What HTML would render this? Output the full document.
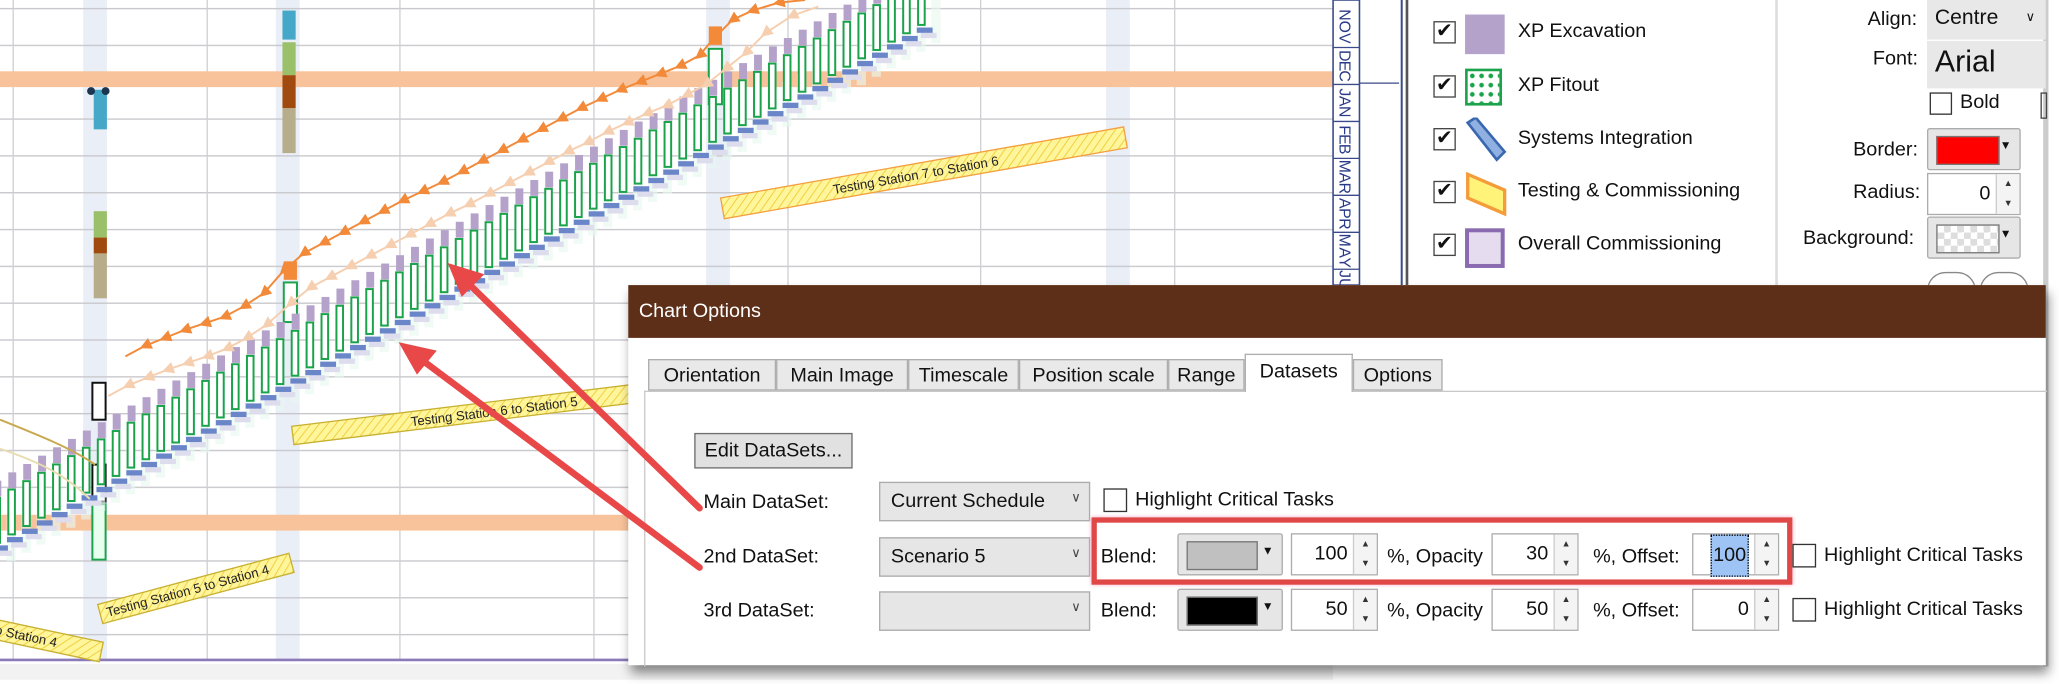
<!DOCTYPE html>
<html><head><meta charset="utf-8"><style>
html,body{margin:0;padding:0;background:#fff;overflow:hidden}
#w{position:absolute;left:0;top:0;width:1560px;height:518px;transform:scale(1.31987);transform-origin:0 0;font-family:"Liberation Sans",sans-serif;color:#111}
.a{position:absolute}
.tab{position:absolute;top:272px;height:24px;border:1px solid #adadad;background:#e9e9e9;font-size:15px;line-height:24px;text-align:center;box-sizing:border-box}
.lbl{position:absolute;font-size:15px}
.combo{position:absolute;width:160px;height:30px;border:1px solid #acacac;background:#e6e6e6;box-sizing:border-box;font-size:15px;line-height:28px;padding-left:8px}
.combo:after{content:"\2228";position:absolute;right:6px;top:-2px;font-size:10px;color:#444}
.cb{position:absolute;width:16px;height:16px;border:1px solid #333;background:#fff;box-sizing:border-box}
.spin{position:absolute;width:66px;height:32px;border:1px solid #acacac;background:#fff;box-sizing:border-box;font-size:15px;line-height:30px}
.spin span{position:absolute;right:22px}
.spin i{position:absolute;right:0;top:0;width:17px;height:30px;border-left:1px solid #ccc;background:#f4f4f4;font-style:normal;font-size:7px;line-height:15px;text-align:center;color:#333}
.colb{position:absolute;width:80px;height:32px;border:1px solid #acacac;background:#e6e6e6;box-sizing:border-box;border-radius:2px}
.colb b{position:absolute;left:6px;top:5px;width:52px;height:20px;border:1px solid #777}
.colb:after{content:"\25BC";position:absolute;right:6px;top:7px;font-size:9px}
.leg{position:absolute;left:1086px;font-size:15px}
.leg .cb{left:0;top:0;width:17px;height:17px;border-color:#444}
.leg .cb:after{content:"\2714";position:absolute;left:1px;top:-3px;font-size:15px}
.leg .t{position:absolute;left:64px;top:-1px;white-space:nowrap}
</style></head><body><div id="w">
<svg class="a" style="left:0;top:0" width="1560" height="518" viewBox="0 0 1560 518">
<defs>
<pattern id="hg" width="1560" height="27.9" patternUnits="userSpaceOnUse" y="6"><line x1="0" y1="0.5" x2="1560" y2="0.5" stroke="#c8c8cc" stroke-width="1"/></pattern>
<pattern id="yl" width="5" height="5" patternUnits="userSpaceOnUse" patternTransform="rotate(45)"><rect width="5" height="5" fill="#fff59a"/><line x1="0" y1="0" x2="0" y2="5" stroke="#f0d040" stroke-width="1.5"/></pattern>
<marker id="tri" markerWidth="6" markerHeight="6" refX="3" refY="3" orient="auto"><path d="M6,0 L0,3 L6,6 Z" fill="#f28a3a"/></marker>
<marker id="tri2" markerWidth="6" markerHeight="6" refX="3" refY="3" orient="auto"><path d="M6,0 L0,3 L6,6 Z" fill="#f6cfb0"/></marker>
</defs>
<rect width="1560" height="518" fill="#fff"/>
<rect x="63" y="0" width="18" height="500" fill="#e9eef7"/>
<rect x="209" y="0" width="18" height="500" fill="#e9eef7"/>
<rect x="535" y="0" width="18" height="500" fill="#e9eef7"/>
<rect x="838" y="0" width="18" height="500" fill="#e9eef7"/>
<rect width="1010" height="500" fill="url(#hg)"/>
<g stroke="#cfcfd4" stroke-width="1">
<line x1="10" y1="0" x2="10" y2="500"/><line x1="157" y1="0" x2="157" y2="500"/><line x1="303" y1="0" x2="303" y2="500"/><line x1="450" y1="0" x2="450" y2="500"/><line x1="597" y1="0" x2="597" y2="500"/><line x1="743" y1="0" x2="743" y2="500"/><line x1="890" y1="0" x2="890" y2="500"/>
</g>
<rect x="0" y="54" width="1010" height="12" fill="#f8c39b"/>
<rect x="0" y="390" width="480" height="12" fill="#f8c39b"/>
<line x1="0" y1="500" x2="1010" y2="500" stroke="#8a7ab8" stroke-width="2"/>
<rect x="0" y="503" width="1010" height="12" fill="#f2f2f2"/>
<rect x="71" y="68" width="10" height="30" fill="#45a8c8"/><circle cx="69" cy="69" r="3" fill="#1c3550"/><circle cx="80" cy="69" r="3" fill="#1c3550"/>
<rect x="71" y="160" width="10" height="20" fill="#9bc06a"/><rect x="71" y="180" width="10" height="12" fill="#a14a10"/><rect x="71" y="192" width="10" height="34" fill="#b8ad8a"/>
<rect x="214" y="8" width="10" height="22" fill="#45a8c8"/><rect x="214" y="32" width="10" height="25" fill="#9bc06a"/><rect x="214" y="57" width="10" height="25" fill="#a14a10"/><rect x="214" y="82" width="10" height="34" fill="#b8ad8a"/>
<rect x="215" y="198" width="10" height="14" fill="#f28a3a"/><rect x="215" y="214" width="10" height="30" fill="#fff" stroke="#1aa34a" stroke-width="1.5"/>
<rect x="70" y="290" width="10" height="28" fill="#fff" stroke="#111" stroke-width="1.5"/>
<rect x="70" y="352" width="10" height="28" fill="#fff" stroke="#111" stroke-width="1.5"/>
<rect x="70" y="382" width="10" height="42" fill="#e8fff0" stroke="#1aa34a" stroke-width="1.5"/>
<rect x="537" y="20" width="10" height="14" fill="#f28a3a"/><rect x="537" y="37" width="10" height="42" fill="#fff" stroke="#1aa34a" stroke-width="1.5"/>
<g id="bars"></g>
<path d="M95,270 L110,262 L125,256 L140,250 L155,245 L170,240 L185,232 L200,222 L215,205 L230,192 L245,184 L260,176 L275,168 L290,160 L305,152 L320,145 L335,138 L350,130 L365,122 L380,114 L395,106 L410,98 L425,90 L440,82 L455,75 L470,68 L485,62 L500,56 L515,50 L530,42 L540,30 L555,15 L570,8 L590,2 L610,0" fill="none" stroke="#f28a3a" stroke-width="1.5" marker-mid="url(#tri)"/>
<path d="M82,300 L97,292 L112,286 L127,280 L142,275 L157,270 L172,264 L187,256 L202,246 L220,230 L235,218 L250,210 L265,202 L280,194 L295,186 L310,178 L325,170 L340,162 L355,155 L370,147 L385,139 L400,131 L415,123 L430,115 L445,108 L460,100 L475,93 L490,86 L505,80 L520,72 L535,64 L550,52 L565,40 L580,25 L600,12 L620,5" fill="none" stroke="#f6cfb0" stroke-width="1.5" marker-mid="url(#tri2)"/>
<path d="M0,318 C30,330 55,340 72,352" fill="none" stroke="#c8a850" stroke-width="1.5"/>
<path d="M0,340 C30,350 50,360 68,378" fill="none" stroke="#e8dcb0" stroke-width="1.5"/>
<g transform="translate(546,150) rotate(-10)"><rect x="0" y="0" width="310" height="16" fill="url(#yl)" stroke="#f2a040" stroke-width="1"/><text x="85" y="12" font-size="10" fill="#222" font-family="Liberation Sans">Testing Station 7 to Station 6</text></g>
<g transform="translate(221,323) rotate(-7)"><rect x="0" y="0" width="260" height="14" fill="url(#yl)" stroke="#c8b030" stroke-width="1"/><text x="90" y="11" font-size="10" fill="#222" font-family="Liberation Sans">Testing Station 6 to Station 5</text></g>
<g transform="translate(74,458) rotate(-15)"><rect x="0" y="0" width="150" height="15" fill="url(#yl)" stroke="#c8b030" stroke-width="1"/><text x="5" y="11" font-size="10" fill="#222" font-family="Liberation Sans">Testing Station 5 to Station 4</text></g>
<g transform="translate(0,470) rotate(12)"><rect x="-40" y="0" width="120" height="15" fill="url(#yl)" stroke="#c8b030" stroke-width="1"/><text x="-2" y="11" font-size="10" fill="#222" font-family="Liberation Sans">o Station 4</text></g>
<rect x="1010" y="0" width="20" height="216" fill="#fff" stroke="#3a4a8a" stroke-width="1.2"/>
<line x1="1030" y1="63" x2="1060" y2="63" stroke="#3a4a8a"/>
<line x1="1062" y1="0" x2="1062" y2="216" stroke="#3a4a8a" stroke-width="1.5"/>
<line x1="1066" y1="0" x2="1066" y2="216" stroke="#555" stroke-width="2"/>
<g font-size="12" fill="#2a3a8a" font-family="Liberation Sans" text-anchor="middle">
<text transform="translate(1015,20) rotate(90)" textLength="26">NOV</text>
<text transform="translate(1015,50) rotate(90)" textLength="24">DEC</text>
<text transform="translate(1015,78) rotate(90)" textLength="22">JAN</text>
<text transform="translate(1015,106) rotate(90)" textLength="22">FEB</text>
<text transform="translate(1015,134) rotate(90)" textLength="26">MAR</text>
<text transform="translate(1015,162) rotate(90)" textLength="24">APR</text>
<text transform="translate(1015,190) rotate(90)" textLength="26">MAY</text>
<text transform="translate(1015,212) rotate(90)">JU</text>
</g>
<g stroke="#3a4a8a"><line x1="1010" y1="36" x2="1030" y2="36"/><line x1="1010" y1="64" x2="1030" y2="64"/><line x1="1010" y1="92" x2="1030" y2="92"/><line x1="1010" y1="120" x2="1030" y2="120"/><line x1="1010" y1="148" x2="1030" y2="148"/><line x1="1010" y1="176" x2="1030" y2="176"/><line x1="1010" y1="204" x2="1030" y2="204"/></g>
<line x1="1346" y1="0" x2="1346" y2="216" stroke="#ddd" stroke-width="2"/>
<rect x="1550" y="0" width="10" height="518" fill="#fff"/>
<rect x="1548" y="0" width="4" height="505" fill="#ccc"/>
</svg>

<div class="leg" style="top:16px"><div class="cb"></div><div class="a" style="left:24px;top:-5px;width:30px;height:30px;background:#b4a2ca"></div><div class="t">XP Excavation</div></div>
<div class="leg" style="top:57px"><div class="cb"></div><div class="a" style="left:24px;top:-5px;width:28px;height:28px;border:2px solid #1aa34a;background:radial-gradient(#1aa34a 1.5px,transparent 2px) 0 0/7px 7px #fff;box-sizing:border-box"></div><div class="t">XP Fitout</div></div>
<div class="leg" style="top:97px"><div class="cb"></div><svg class="a" style="left:24px;top:-8px" width="32" height="34"><path d="M2,4 L8,0 L30,26 L24,32 Z" fill="#8fb0e0" stroke="#3a68b0" stroke-width="2"/></svg><div class="t">Systems Integration</div></div>
<div class="leg" style="top:137px"><div class="cb"></div><svg class="a" style="left:24px;top:-7px" width="32" height="34"><path d="M2,2 L30,14 L30,32 L2,20 Z" fill="#fff37a" stroke="#f49b3a" stroke-width="2.5"/></svg><div class="t">Testing &amp; Commissioning</div></div>
<div class="leg" style="top:177px"><div class="cb"></div><div class="a" style="left:24px;top:-4px;width:30px;height:30px;border:3px solid #8a6bb0;background:#e5dcf0;box-sizing:border-box"></div><div class="t">Overall Commissioning</div></div>
<div class="lbl" style="left:1415px;top:6px">Align:</div><div class="a" style="left:1460px;top:0;width:90px;height:30px;background:#e8e8e8;font-size:16px;line-height:28px;padding-left:6px;box-sizing:border-box">Centre <span style="font-size:10px;position:absolute;right:8px">&#8744;</span></div>
<div class="lbl" style="left:1419px;top:36px">Font:</div><div class="a" style="left:1460px;top:31px;width:90px;height:36px;background:#e8e8e8;font-size:23px;line-height:30px;padding-left:6px;box-sizing:border-box">Arial</div>
<div class="cb" style="left:1462px;top:70px;width:17px;height:17px"></div><div class="lbl" style="left:1485px;top:69px">Bold</div><div class="a" style="left:1546px;top:70px;width:3px;height:18px;border:1px solid #444"></div>
<div class="lbl" style="left:1404px;top:105px">Border:</div><div class="colb" style="left:1460px;top:97px;width:71px"><b style="background:#f00;width:46px"></b></div>
<div class="lbl" style="left:1404px;top:137px">Radius:</div><div class="spin" style="left:1460px;top:131px;width:71px"><span>0</span><i>▲<br>▼</i></div>
<div class="lbl" style="left:1366px;top:172px">Background:</div><div class="colb" style="left:1460px;top:164px;width:71px"><b style="background:repeating-conic-gradient(#ddd 0 25%,#fff 0 50%) 0 0/10px 10px;width:46px"></b></div>
<div class="a" style="left:1460px;top:206px;width:35px;height:14px;border:1px solid #888;border-radius:14px 14px 0 0"></div><div class="a" style="left:1500px;top:206px;width:35px;height:14px;border:1px solid #888;border-radius:14px 14px 0 0"></div>

<div class="a" style="left:476px;top:216px;width:1074px;height:288px;background:#fff;box-shadow:2px 6px 8px rgba(0,0,0,.45)"></div>
<div class="a" style="left:476px;top:216px;width:1074px;height:40px;background:#5e2f18;color:#fff;font-size:15px;line-height:40px;padding-left:8px;box-sizing:border-box">Chart Options</div>
<div class="a" style="left:488px;top:296px;width:1062px;height:208px;border-left:1px solid #c8c8c8;border-top:1px solid #c8c8c8"></div>
<div class="tab" style="left:491px;width:97px">Orientation</div>
<div class="tab" style="left:588px;width:100px">Main Image</div>
<div class="tab" style="left:688px;width:84px">Timescale</div>
<div class="tab" style="left:772px;width:113px">Position scale</div>
<div class="tab" style="left:885px;width:58px">Range</div>
<div class="tab" style="left:943px;width:82px;top:268px;height:29px;background:#fff;border-bottom:none;line-height:26px">Datasets</div>
<div class="tab" style="left:1025px;width:68px">Options</div>
<div class="a" style="left:526px;top:328px;width:120px;height:27px;border:1px solid #6e6e6e;background:#e1e1e1;font-size:15px;line-height:26px;text-align:center;box-sizing:border-box">Edit DataSets...</div>
<div class="lbl" style="left:533px;top:372px">Main DataSet:</div>
<div class="combo" style="left:666px;top:365px">Current Schedule</div>
<div class="cb" style="left:836px;top:370px;width:18px;height:18px"></div><div class="lbl" style="left:860px;top:370px">Highlight Critical Tasks</div>
<div class="lbl" style="left:533px;top:413px">2nd DataSet:</div>
<div class="combo" style="left:666px;top:407px">Scenario 5</div>
<div class="lbl" style="left:533px;top:454px">3rd DataSet:</div>
<div class="combo" style="left:666px;top:448px"></div>
<div class="a" style="left:827px;top:392px;width:531px;height:51px;border:4px solid #e04848;box-sizing:border-box;box-shadow:0 0 3px #f0a0c0"></div>
<div class="lbl" style="left:834px;top:413px">Blend:</div>
<div class="colb" style="left:892px;top:404px"><b style="background:#c0c0c0"></b></div>
<div class="spin" style="left:978px;top:404px"><span>100</span><i>▲<br>▼</i></div>
<div class="lbl" style="left:1051px;top:413px">%, Opacity</div>
<div class="spin" style="left:1130px;top:404px"><span>30</span><i>▲<br>▼</i></div>
<div class="lbl" style="left:1207px;top:413px">%, Offset:</div>
<div class="spin" style="left:1282px;top:404px"><span style="background:#9ec4f6;border:1px dotted #000;padding:0 1px">100</span><i>▲<br>▼</i></div>
<div class="cb" style="left:1358px;top:412px;width:18px;height:18px"></div><div class="lbl" style="left:1382px;top:412px">Highlight Critical Tasks</div>
<div class="lbl" style="left:834px;top:454px">Blend:</div>
<div class="colb" style="left:892px;top:446px"><b style="background:#000"></b></div>
<div class="spin" style="left:978px;top:446px"><span>50</span><i>▲<br>▼</i></div>
<div class="lbl" style="left:1051px;top:454px">%, Opacity</div>
<div class="spin" style="left:1130px;top:446px"><span>50</span><i>▲<br>▼</i></div>
<div class="lbl" style="left:1207px;top:454px">%, Offset:</div>
<div class="spin" style="left:1282px;top:446px"><span>0</span><i>▲<br>▼</i></div>
<div class="cb" style="left:1358px;top:453px;width:18px;height:18px"></div><div class="lbl" style="left:1382px;top:453px">Highlight Critical Tasks</div>

<svg class="a" style="left:0;top:0" width="1560" height="518">
<g stroke="#e84848" stroke-width="5" fill="#e84848" stroke-linecap="round">
<line x1="530" y1="385" x2="352" y2="212"/><path d="M340,200 L366,208 L350,224 Z" stroke-width="1"/>
<line x1="530" y1="430" x2="316" y2="270"/><path d="M303,260 L330,266 L316,283 Z" stroke-width="1"/>
</g></svg>
</div>
<script>
var g=document.getElementById('bars'),s='';
for(var x=-5;x<700;x+=11.3){
 var b=330-(x-140)*0.56; if(b<-40)continue;
 var h=34, t=b-h;
 s+='<rect x="'+(x+10)+'" y="'+(t+14)+'" width="7" height="'+h+'" fill="#e8f8f0" opacity=".6"/>';
 s+='<rect x="'+(x+2)+'" y="'+(b+6)+'" width="12" height="4" fill="#dde" />';
 s+='<rect x="'+x+'" y="'+(t-13)+'" width="6" height="12" fill="#b4a2ca"/>';
 s+='<rect x="'+x+'" y="'+t+'" width="5" height="'+h+'" fill="#fff" stroke="#1aa34a" stroke-width="1.5"/>';
 s+='<rect x="'+(x-1)+'" y="'+(b+2)+'" width="12" height="4" fill="#6a86c8"/>';
}
g.innerHTML=s;
</script>
</body></html>
